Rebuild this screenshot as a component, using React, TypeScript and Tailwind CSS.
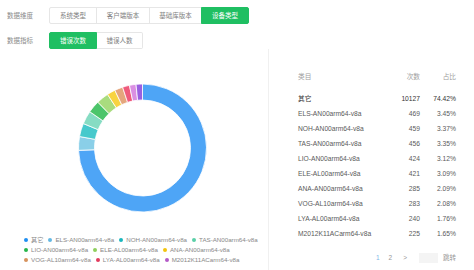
import React from "react";

const rows = [
  { name: "其它", count: 10127, pct: 74.42, slice: "#4ea5f6", dot: "#1f8ef1" },
  { name: "ELS-AN00arm64-v8a", count: 469, pct: 3.45, slice: "#8acfe8", dot: "#64b8e3" },
  { name: "NOH-AN00arm64-v8a", count: 459, pct: 3.37, slice: "#46c9cc", dot: "#1ab6bd" },
  { name: "TAS-AN00arm64-v8a", count: 456, pct: 3.35, slice: "#86dcc3", dot: "#5bcfa8" },
  { name: "LIO-AN00arm64-v8a", count: 424, pct: 3.12, slice: "#4cc56a", dot: "#26b64a" },
  { name: "ELE-AL00arm64-v8a", count: 421, pct: 3.09, slice: "#a9dc7e", dot: "#8fcf5e" },
  { name: "ANA-AN00arm64-v8a", count: 285, pct: 2.09, slice: "#f8d341", dot: "#f2c40f" },
  { name: "VOG-AL10arm64-v8a", count: 283, pct: 2.08, slice: "#e4a67d", dot: "#d6925d" },
  { name: "LYA-AL00arm64-v8a", count: 240, pct: 1.76, slice: "#ef5b7c", dot: "#e23a5e" },
  { name: "M2012K11ACarm64-v8a", count: 225, pct: 1.65, slice: "#da8fe2", dot: "#b45ac8" },
];

const dims = ["系统类型", "客户端版本", "基础库版本", "设备类型"];

function arc(cx: number, cy: number, R: number, r: number, a0: number, a1: number) {
  const p = (rad: number, a: number) => {
    const t = (a - 90) * (Math.PI / 180);
    return `${(cx + rad * Math.cos(t)).toFixed(2)} ${(cy + rad * Math.sin(t)).toFixed(2)}`;
  };
  const large = a1 - a0 > 180 ? 1 : 0;
  return `M${p(R, a0)} A${R} ${R} 0 ${large} 1 ${p(R, a1)} L${p(r, a1)} A${r} ${r} 0 ${large} 0 ${p(r, a0)} Z`;
}

function Donut() {
  const slices = [...rows.map((r) => ({ pct: r.pct, color: r.slice })), { pct: 1.62, color: "#9a60e0" }];
  let start = 0;
  return (
    <svg width="268" height="186" viewBox="0 0 268 186" className="block">
      {slices.map((s, i) => {
        const end = start + (s.pct / 100) * 360;
        const d = arc(142.5, 99, 64, 48, start, end);
        start = end;
        return <path key={i} d={d} fill={s.color} stroke="#fff" strokeWidth="0.8" />;
      })}
    </svg>
  );
}

export default function App() {
  return (
    <div
      className="w-[474px] h-[270px] overflow-hidden bg-white text-[#666]"
      style={{ fontFamily: '"Liberation Sans", "Noto Sans CJK SC", sans-serif' }}
    >
      <div className="flex items-center pl-[7px] pt-[7px]">
        <span className="w-[42px] text-[6.5px] text-[#8a8a8a]">数据维度</span>
        <div className="flex h-[17px]">
          {dims.map((d, i) => {
            const active = i === 3;
            const widths = ["w-[48px]", "w-[54px]", "w-[53px]", "w-[48px]"];
            return (
              <div
                key={d}
                className={`${widths[i]} flex items-center justify-center text-[6.5px] border ${
                  active ? "bg-[#1fbf62] border-[#1fbf62] text-white rounded-r-[2px]" : "border-[#e6e6e6] text-[#808080]"
                } ${i === 0 ? "rounded-l-[2px]" : "-ml-px"}`}
              >
                {d}
              </div>
            );
          })}
        </div>
      </div>

      <div className="mt-[8px] flex items-center pl-[7px]">
        <span className="w-[42px] text-[6.5px] text-[#8a8a8a]">数据指标</span>
        <div className="flex h-[17px]">
          <div className="w-[48px] flex items-center justify-center rounded-l-[2px] border border-[#1fbf62] bg-[#1fbf62] text-[6.5px] text-white">
            错误次数
          </div>
          <div className="w-[46px] flex items-center justify-center rounded-r-[2px] border border-l-0 border-[#e6e6e6] text-[6.5px] text-[#808080]">
            错误人数
          </div>
        </div>
      </div>

      <div className="flex h-[221px]">
        <div className="w-[268px] shrink-0">
          <Donut />
          <div className="ml-[24px] flex w-[242px] flex-wrap gap-x-[5px] text-[6.2px] leading-[10px] text-[#888]">
            {rows.map((r) => (
              <div key={r.name} className="flex h-[10px] items-center gap-[3px]">
                <span className="h-[4px] w-[4px] rounded-full" style={{ background: r.dot }} />
                <span>{r.name}</span>
              </div>
            ))}
          </div>
        </div>

        <div className="flex-1 border-l border-[#f0f0f0] pl-[29px] pr-[18px] pt-[21px] text-[6.7px]">
          <div className="flex h-[15px] items-center text-[#a0a0a0]">
            <span className="flex-1">类目</span>
            <span className="w-[30px] text-right">次数</span>
            <span className="w-[36px] text-right">占比</span>
          </div>
          <div className="mt-[7px]">
            {rows.map((r, i) => (
              <div key={r.name} className={`flex h-[15px] items-center ${i === 0 ? "text-[#333]" : "text-[#5a5a5a]"}`}>
                <span className="flex-1">{r.name}</span>
                <span className="w-[30px] text-right">{r.count}</span>
                <span className="w-[36px] text-right">{r.pct.toFixed(2)}%</span>
              </div>
            ))}
          </div>
          <div className="mt-[9px] flex h-[14px] items-center justify-end text-[6.5px] text-[#999]">
            <span className="text-[#7fb8e8]">1</span>
            <span className="ml-[9px]">2</span>
            <span className="ml-[11px]">&gt;</span>
            <span className="ml-[12px] h-[10px] w-[19px] bg-[#f4f4f4]" />
            <span className="ml-[5px]">跳转</span>
          </div>
        </div>
      </div>
    </div>
  );
}
